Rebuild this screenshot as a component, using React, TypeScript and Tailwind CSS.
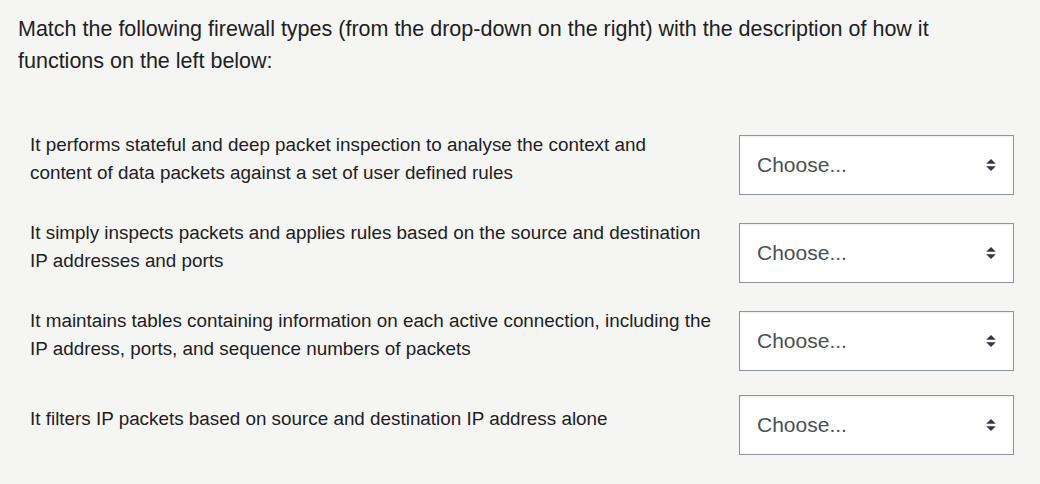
type Row = {
  text: string;
};

const rows: Row[] = [
  {
    text: "It performs stateful and deep packet inspection to analyse the context and content of data packets against a set of user defined rules",
  },
  {
    text: "It simply inspects packets and applies rules based on the source and destination IP addresses and ports",
  },
  {
    text: "It maintains tables containing information on each active connection, including the IP address, ports, and sequence numbers of packets",
  },
  {
    text: "It filters IP packets based on source and destination IP address alone",
  },
];

function ChooseSelect({ label }: { label: string }) {
  return (
    <div className="relative w-[275px] shrink-0">
      <select
        aria-label={label}
        defaultValue=""
        className="block h-[60px] w-full appearance-none rounded-none border border-[#8f959e] bg-white pl-[17px] pr-10 text-[21px] text-[#495057] shadow-[inset_0_1px_2px_rgba(0,0,0,0.075)] outline-none"
        style={{ fontFamily: '"Liberation Sans", Arial, sans-serif' }}
      >
        <option value="">Choose...</option>
        <option value="1">Packet filtering firewall</option>
        <option value="2">Stateful inspection firewall</option>
        <option value="3">Next-generation firewall</option>
        <option value="4">Circuit-level gateway</option>
      </select>
      <svg
        className="pointer-events-none absolute right-[18px] top-1/2 h-[12px] w-[10px] -translate-y-1/2"
        viewBox="0 0 4 5"
        fill="#343a40"
        aria-hidden="true"
      >
        <path d="M2 0L0 2h4zm0 5L0 3h4z" />
      </svg>
    </div>
  );
}

export default function App() {
  return (
    <div
      className="min-h-[484px] w-full bg-[#f5f5f4] pr-[26px] pl-[18px] pt-[13px] text-[#1d2125]"
      style={{ fontFamily: '"Liberation Sans", Arial, sans-serif' }}
    >
      <p className="text-[21.5px] leading-[32px]">
        Match the following firewall types (from the drop-down on the right) with the description of how it functions on the left below:
      </p>

      <div className="mt-[54px] flex flex-col gap-[20px] pl-[12px]">
        {rows.map((row, i) => (
          <div key={i} className="flex items-center justify-between">
            <div className="w-[682px] pb-[12px] text-[18.85px] leading-[28px]">{row.text}</div>
            <ChooseSelect label={`Answer ${i + 1}`} />
          </div>
        ))}
      </div>
    </div>
  );
}
